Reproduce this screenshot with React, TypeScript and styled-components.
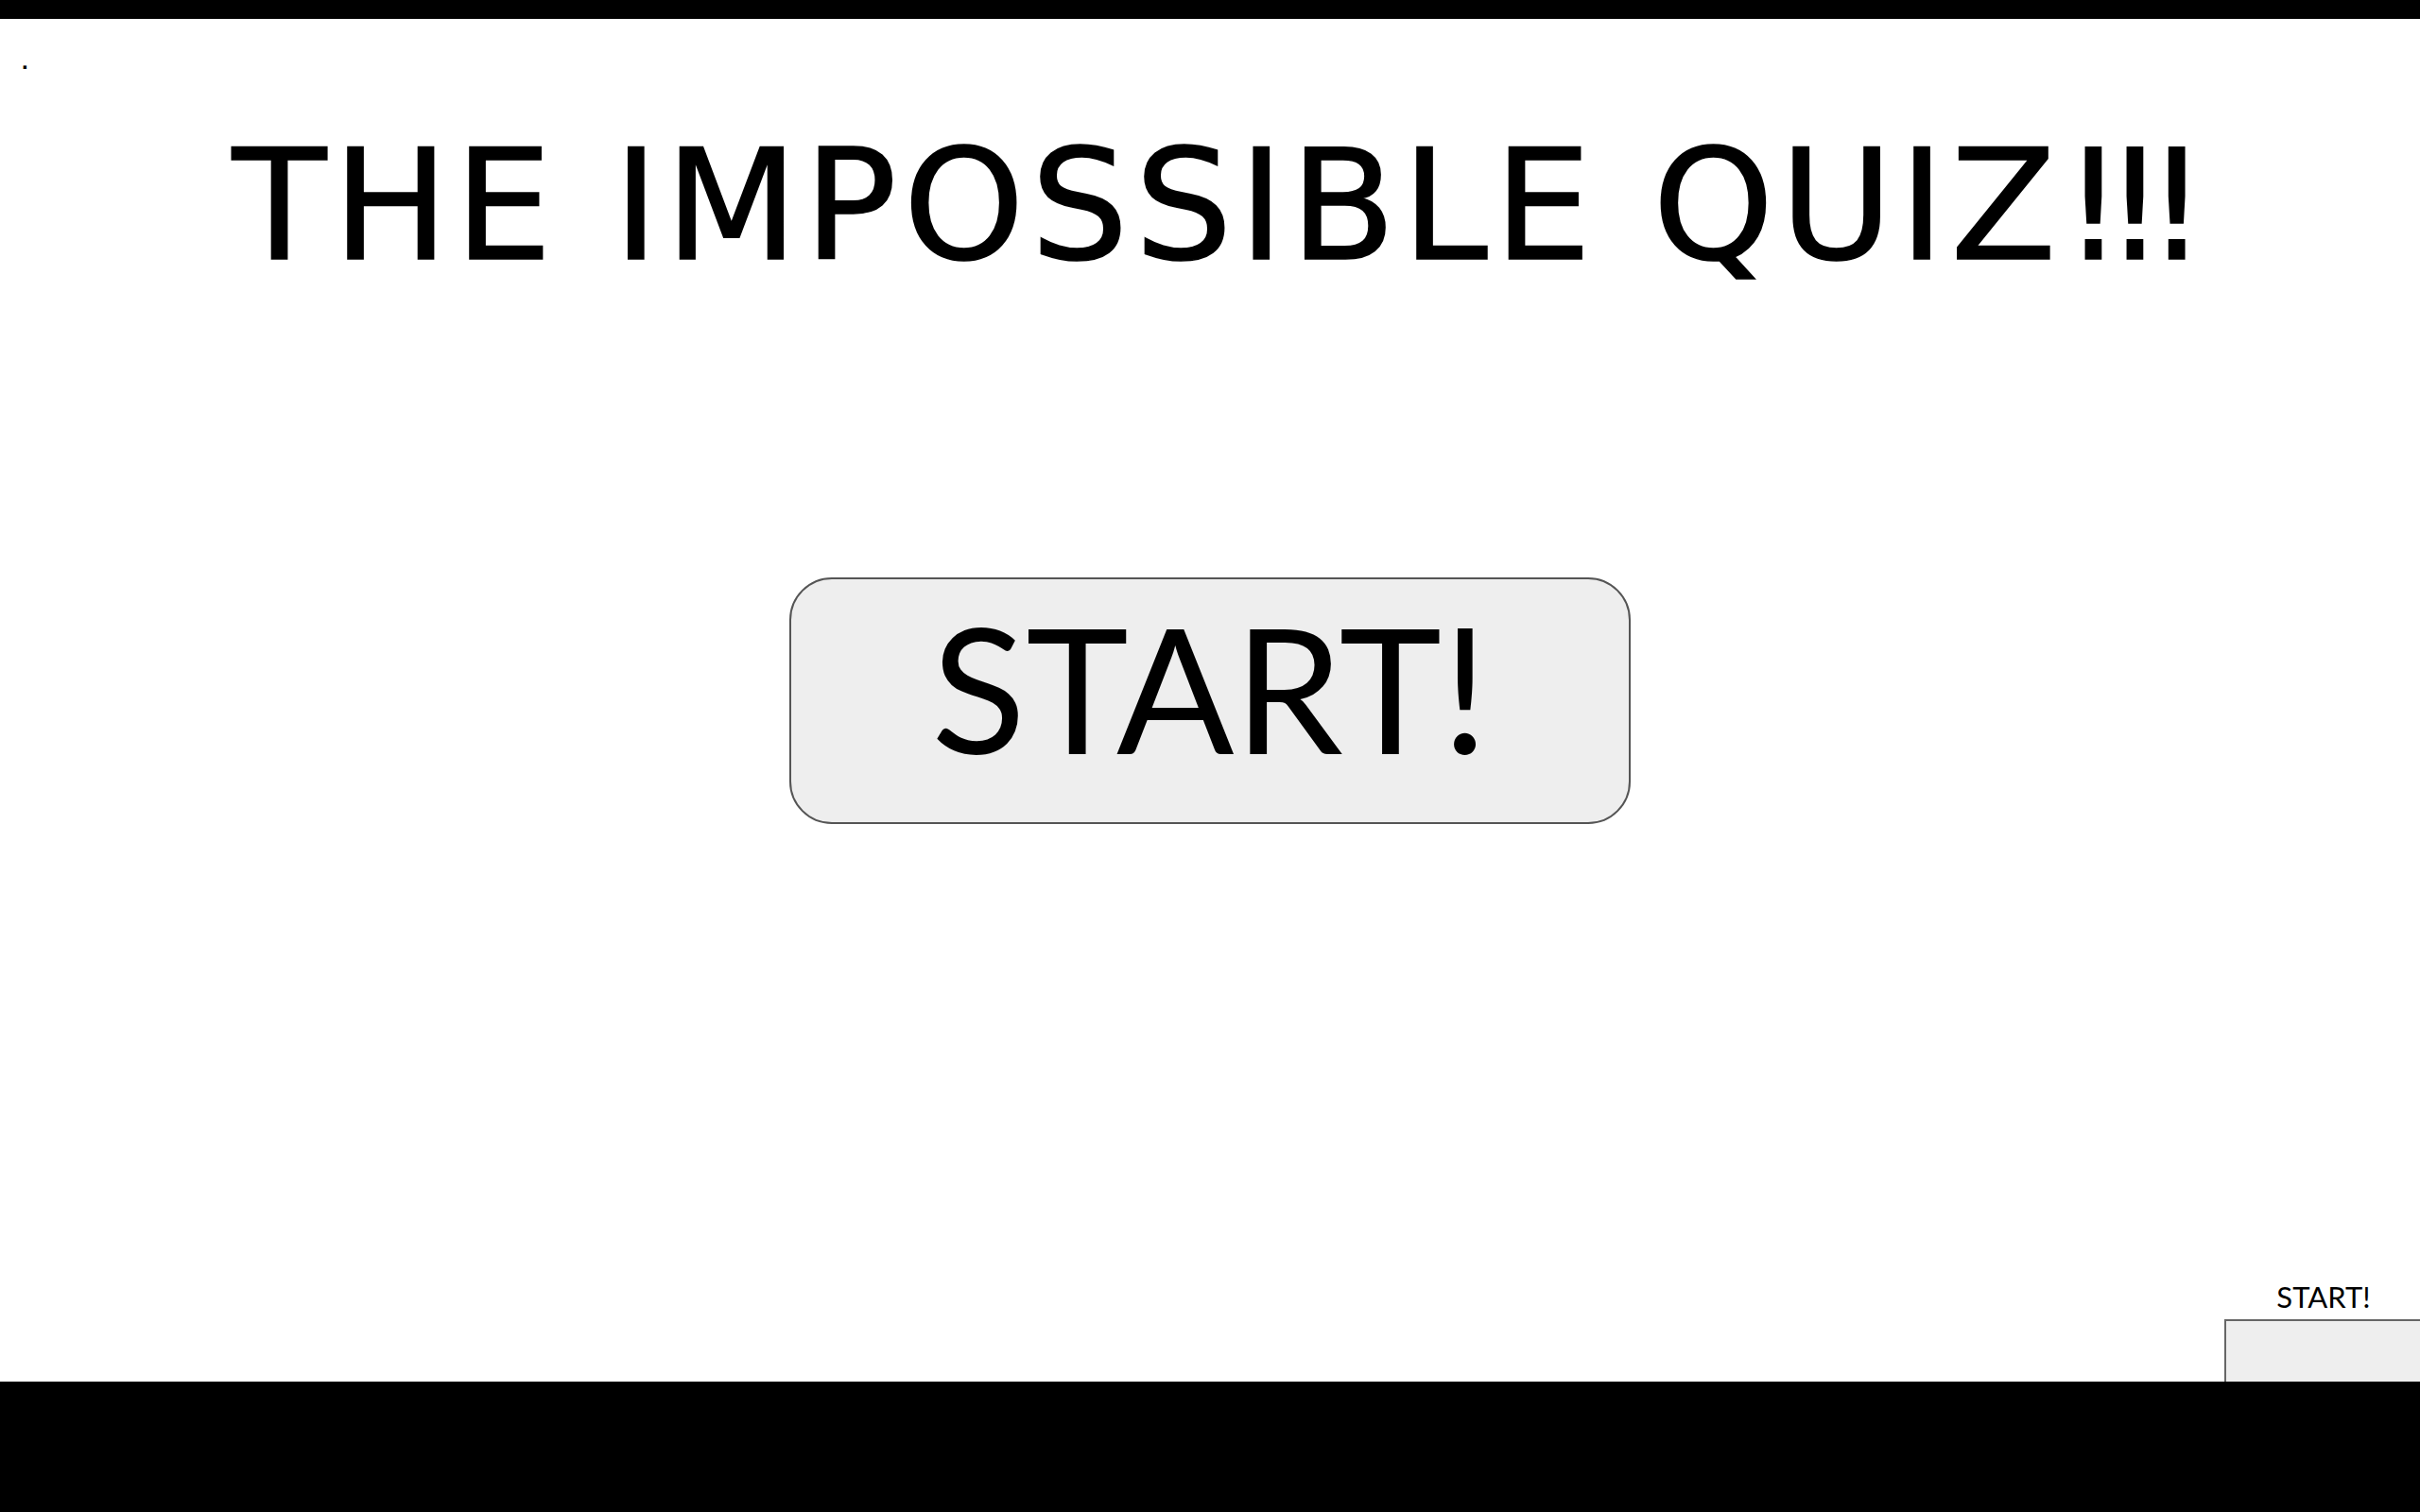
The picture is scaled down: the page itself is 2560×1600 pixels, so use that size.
import React from "react";
import styled, { createGlobalStyle } from "styled-components";

const GlobalStyle = createGlobalStyle`
  html, body {
    margin: 0;
    padding: 0;
    background: #fff;
    overflow: hidden;
  }
`;

export default function App() {
  return (
    <>
      <GlobalStyle />
      <Page>
        <TopBar />
        <Main>
          <Dot>.</Dot>
          <Title>
            THE IMPOSSIBLE QUIZ<Bangs>!!!</Bangs>
          </Title>
          <StartButton>START!</StartButton>
          <MiniStart>
            <MiniLabel>START!</MiniLabel>
            <MiniBox />
          </MiniStart>
        </Main>
        <Footer />
      </Page>
    </>
  );
}

const Page = styled.div`
  height: 100vh;
  display: flex;
  flex-direction: column;
`;

const TopBar = styled.div`
  height: 20px;
  background: #000;
  flex-shrink: 0;
`;

const Main = styled.main`
  flex: 1;
  display: flex;
  flex-direction: column;
  align-items: center;
  overflow: hidden;
`;

const Dot = styled.div`
  align-self: flex-start;
  margin: 34px 0 0 23px;
  font-family: "Liberation Sans", sans-serif;
  font-weight: 700;
  font-size: 24px;
  line-height: 22px;
`;

const Title = styled.h1`
  margin: 60px 0 0;
  font-family: "DejaVu Sans", sans-serif;
  font-weight: 400;
  font-size: 163px;
  line-height: 1;
  letter-spacing: 0.04em;
  -webkit-text-stroke: 1.6px #000;
  color: #000;
  white-space: nowrap;
`;

const Bangs = styled.span`
  letter-spacing: -0.13em;
`;

const StartButton = styled.button`
  margin-top: 312px;
  width: 890px;
  height: 261px;
  display: flex;
  align-items: center;
  justify-content: center;
  padding: 0 0 30px;
  background: #eeeeee;
  border: 2px solid #555;
  border-radius: 45px;
  font-family: Lato, "Open Sans", sans-serif;
  font-weight: 400;
  font-size: 184px;
  line-height: 1;
  color: #000;
  cursor: pointer;
`;

const MiniStart = styled.div`
  margin-top: auto;
  align-self: flex-end;
  width: 210px;
  margin-right: -3px;
  display: flex;
  flex-direction: column;
  align-items: center;
  transform: translateY(14px);
`;

const MiniLabel = styled.span`
  font-family: Lato, "Open Sans", sans-serif;
  font-size: 31px;
  line-height: 1;
  color: #000;
  margin-bottom: 8px;
`;

const MiniBox = styled.div`
  width: 100%;
  height: 80px;
  box-sizing: border-box;
  background: #eeeeee;
  border: 2px solid #666;
`;

const Footer = styled.footer`
  height: 138px;
  background: #000;
  flex-shrink: 0;
`;
